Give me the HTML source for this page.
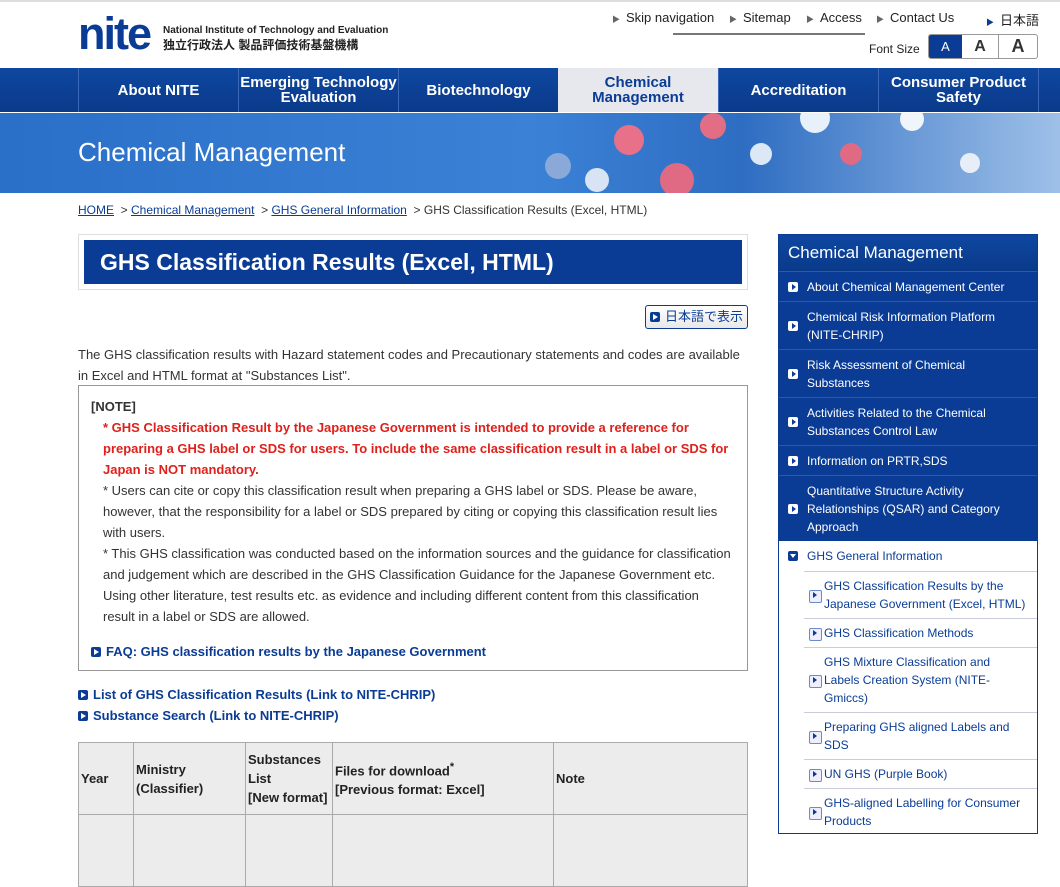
<!DOCTYPE html>
<html><head><meta charset="utf-8"><style>
*{margin:0;padding:0;box-sizing:border-box}
body{width:1060px;height:824px;overflow:hidden;background:#fff;font-family:"Liberation Sans","Noto Sans CJK JP",sans-serif;color:#333;position:relative}
.abs{position:absolute}
.top{top:0;left:0;width:1060px;height:2px;background:#ddd}
.logo{left:78px;top:16px;color:#0a3c96;font-weight:bold;font-size:45px;letter-spacing:-2px;line-height:36px}
.lt{left:163px;top:24px;font-size:10px;color:#222;font-weight:bold;line-height:14px}
.util{top:10px;font-size:13px;color:#222}
.util b{font-size:8px;color:#666;margin-right:6px}
.nav{top:68px;left:0;width:1060px;height:44px;background:linear-gradient(#0e47a0,#0a3a8a)}
.ni{position:absolute;top:0;height:44px;width:160px;border-left:1px solid #3a68b8;color:#fff;font-weight:bold;font-size:15px;display:flex;align-items:center;justify-content:center;text-align:center;line-height:15px}
.banner{top:113px;left:0;width:1060px;height:80px;background:linear-gradient(90deg,#2a6fc8 0%,#3b82d6 50%,#2e6dc2 70%,#9ec0e8 100%);overflow:hidden}
.mol{position:absolute;border-radius:50%}
.crumb{top:203px;left:78px;font-size:12px;color:#333}
.crumb a{color:#0a3c96;text-decoration:underline}
.h1box{left:78px;top:234px;width:670px;height:56px;border:1px solid #ddd;padding:5px}
.h1{background:#0a3c96;color:#fff;font-weight:bold;font-size:23px;height:44px;line-height:44px;padding-left:16px}
.jp{left:645px;top:305px;width:103px;height:24px;border:1px solid #0a3c96;border-radius:3px;background:linear-gradient(#fff,#e8e8e8);font-size:13px;color:#0a3c96;line-height:22px;padding-left:4px}
.ic{display:inline-block;width:10px;height:10px;background:#0a3c96;border-radius:2px;position:relative;vertical-align:-1px;margin-right:5px}
.ic:after{content:"";position:absolute;left:3px;top:2px;border-left:5px solid #fff;border-top:3px solid transparent;border-bottom:3px solid transparent}
.p{left:78px;top:344px;width:670px;font-size:13px;line-height:21px}
.note{left:78px;top:385px;width:670px;height:286px;border:1px solid #999;padding:10px 15px 10px 12px;font-size:13px;line-height:21px}
.red{color:#e0201a;font-weight:bold}
.lnk{color:#0a3c96;font-size:13px;font-weight:bold}
table{position:absolute;left:78px;top:742px;width:670px;border-collapse:collapse;font-size:13px;font-weight:bold;color:#222}
td{border:1px solid #aaa;background:#ececec;padding:2px;line-height:19px;height:72px}
.side{left:778px;top:234px;width:260px;height:600px;border:1px solid #0a3c96;background:#fff}
.sh{height:36px;background:linear-gradient(#0e47a0,#0a3a8a);color:#fff;font-size:17px;line-height:36px;padding-left:9px}
.si{background:#0a3c96;color:#fff;font-size:12px;line-height:18px;border-top:1px solid #2a5aaa;display:flex;align-items:center;padding-left:28px;padding-right:22px;position:relative}
.si:before{content:"";position:absolute;left:9px;top:50%;margin-top:-5px;width:10px;height:10px;background:#fff;border-radius:2px}
.si:after{content:"";position:absolute;left:13px;top:50%;margin-top:-3px;border-left:4px solid #0a3c96;border-top:3px solid transparent;border-bottom:3px solid transparent}
.sub{margin-left:25px;border-top:1px solid #ccd;font-size:12px;color:#0a3c96;line-height:18px;display:flex;align-items:center;padding-left:20px;padding-right:2px;position:relative;white-space:nowrap}
.sub:before{content:"";position:absolute;left:5px;top:50%;margin-top:-5px;width:11px;height:11px;border:1px solid #6a8ac8;border-radius:2px;background:#eef}
.sub:after{content:"";position:absolute;left:9px;top:50%;margin-top:-3px;border-left:4px solid #0a3c96;border-top:3px solid transparent;border-bottom:3px solid transparent}
</style></head><body>
<div class="abs top"></div>
<div class="abs logo">nite</div>
<div class="abs lt">National Institute of Technology and Evaluation<br><span style="font-size:12px">独立行政法人 製品評価技術基盤機構</span></div>
<div class="abs util" style="left:612px"><b>▶</b>Skip navigation</div>
<div class="abs util" style="left:729px"><b>▶</b>Sitemap</div>
<div class="abs util" style="left:806px"><b>▶</b>Access</div>
<div class="abs util" style="left:876px"><b>▶</b>Contact Us</div>
<div class="abs util" style="left:986px"><b style="color:#0a3c96">▶</b>日本語</div>
<div class="abs" style="left:673px;top:33px;width:192px;height:2px;background:#777"></div>
<div class="abs" style="left:869px;top:42px;font-size:12px;color:#222">Font Size</div>
<div class="abs" style="left:928px;top:34px;width:110px;height:25px;border:1px solid #999;border-radius:3px;display:flex;overflow:hidden;font-weight:bold">
<div style="width:33px;background:#0a3c96;color:#fff;text-align:center;line-height:23px;font-size:13px;font-weight:normal">A</div>
<div style="width:37px;text-align:center;line-height:23px;font-size:16px;border-right:1px solid #999">A</div>
<div style="flex:1;text-align:center;line-height:23px;font-size:18px">A</div></div>
<div class="abs nav">
<div class="ni" style="left:78px">About NITE</div>
<div class="ni" style="left:238px">Emerging Technology<br>Evaluation</div>
<div class="ni" style="left:398px">Biotechnology</div>
<div class="ni" style="left:558px;background:#e6e8ee;color:#0a3c96;font-weight:normal;font-size:15px;border:none"><span style="font-weight:600">Chemical<br>Management</span></div>
<div class="ni" style="left:718px">Accreditation</div>
<div class="ni" style="left:878px">Consumer Product<br>Safety</div>
<div class="ni" style="left:1038px;width:22px"></div>
</div>
<div class="abs banner">
<div class="mol" style="left:545px;top:40px;width:26px;height:26px;background:#8aa8d8"></div>
<div class="mol" style="left:614px;top:12px;width:30px;height:30px;background:#e87088"></div>
<div class="mol" style="left:660px;top:50px;width:34px;height:34px;background:#e06a84"></div>
<div class="mol" style="left:585px;top:55px;width:24px;height:24px;background:#d8e4f4"></div>
<div class="mol" style="left:700px;top:0px;width:26px;height:26px;background:#e26e86"></div>
<div class="mol" style="left:750px;top:30px;width:22px;height:22px;background:#dde8f6"></div>
<div class="mol" style="left:800px;top:-10px;width:30px;height:30px;background:#e8f0fa"></div>
<div class="mol" style="left:840px;top:30px;width:22px;height:22px;background:#e06a84"></div>
<div class="mol" style="left:900px;top:-6px;width:24px;height:24px;background:#f0f4fb"></div>
<div class="mol" style="left:960px;top:40px;width:20px;height:20px;background:#e8eef8"></div>
<div style="position:absolute;left:78px;top:24px;color:#fff;font-size:26px">Chemical Management</div>
</div>
<div class="abs crumb"><a>HOME</a> &nbsp;&gt; <a>Chemical Management</a> &nbsp;&gt; <a>GHS General Information</a> &nbsp;&gt; GHS Classification Results (Excel, HTML)</div>
<div class="abs h1box"><div class="h1">GHS Classification Results (Excel, HTML)</div></div>
<div class="abs jp"><span class="ic"></span>日本語で表示</div>
<div class="abs p">The GHS classification results with Hazard statement codes and Precautionary statements and codes are available in Excel and HTML format at "Substances List".</div>
<div class="abs note"><b>[NOTE]</b><div style="padding-left:12px">
<span class="red">* GHS Classification Result by the Japanese Government is intended to provide a reference for preparing a GHS label or SDS for users. To include the same classification result in a label or SDS for Japan is NOT mandatory.</span><br>
* Users can cite or copy this classification result when preparing a GHS label or SDS. Please be aware, however, that the responsibility for a label or SDS prepared by citing or copying this classification result lies with users.<br>
* This GHS classification was conducted based on the information sources and the guidance for classification and judgement which are described in the GHS Classification Guidance for the Japanese Government etc. Using other literature, test results etc. as evidence and including different content from this classification result in a label or SDS are allowed.</div>
<div class="lnk" style="margin-top:14px"><span class="ic"></span>FAQ: GHS classification results by the Japanese Government</div></div>
<div class="abs lnk" style="left:78px;top:687px"><span class="ic"></span>List of GHS Classification Results (Link to NITE-CHRIP)</div>
<div class="abs lnk" style="left:78px;top:708px"><span class="ic"></span>Substance Search (Link to NITE-CHRIP)</div>
<table><tr><td style="width:55px">Year</td><td style="width:112px">Ministry<br>(Classifier)</td><td style="width:87px">Substances List<br>[New format]</td><td style="width:221px">Files for download<sup>*</sup><br>[Previous format: Excel]</td><td>Note</td></tr><tr><td></td><td></td><td></td><td></td><td></td></tr></table>
<div class="abs side">
<div class="sh">Chemical Management</div>
<div class="si" style="height:30px">About Chemical Management Center</div>
<div class="si" style="height:48px">Chemical Risk Information Platform (NITE-CHRIP)</div>
<div class="si" style="height:48px">Risk Assessment of Chemical Substances</div>
<div class="si" style="height:48px">Activities Related to the Chemical Substances Control Law</div>
<div class="si" style="height:30px">Information on PRTR,SDS</div>
<div class="si" style="height:66px">Quantitative Structure Activity Relationships (QSAR) and Category Approach</div>
<div style="height:30px;font-size:12px;color:#0a3c96;line-height:30px;padding-left:28px;position:relative"><span style="position:absolute;left:9px;top:10px;width:10px;height:10px;background:#0a3c96;border-radius:2px"></span><span style="position:absolute;left:11px;top:13px;border-top:4px solid #fff;border-left:3px solid transparent;border-right:3px solid transparent"></span>GHS General Information</div>
<div class="sub" style="height:47px"><span>GHS Classification Results by the<br>Japanese Government (Excel, HTML)</span></div>
<div class="sub" style="height:29px">GHS Classification Methods</div>
<div class="sub" style="height:65px"><span>GHS Mixture Classification and<br>Labels Creation System (NITE-<br>Gmiccs)</span></div>
<div class="sub" style="height:47px"><span>Preparing GHS aligned Labels and<br>SDS</span></div>
<div class="sub" style="height:29px">UN GHS (Purple Book)</div>
<div class="sub" style="height:47px"><span>GHS-aligned Labelling for Consumer<br>Products</span></div>
</div>
</body></html>
